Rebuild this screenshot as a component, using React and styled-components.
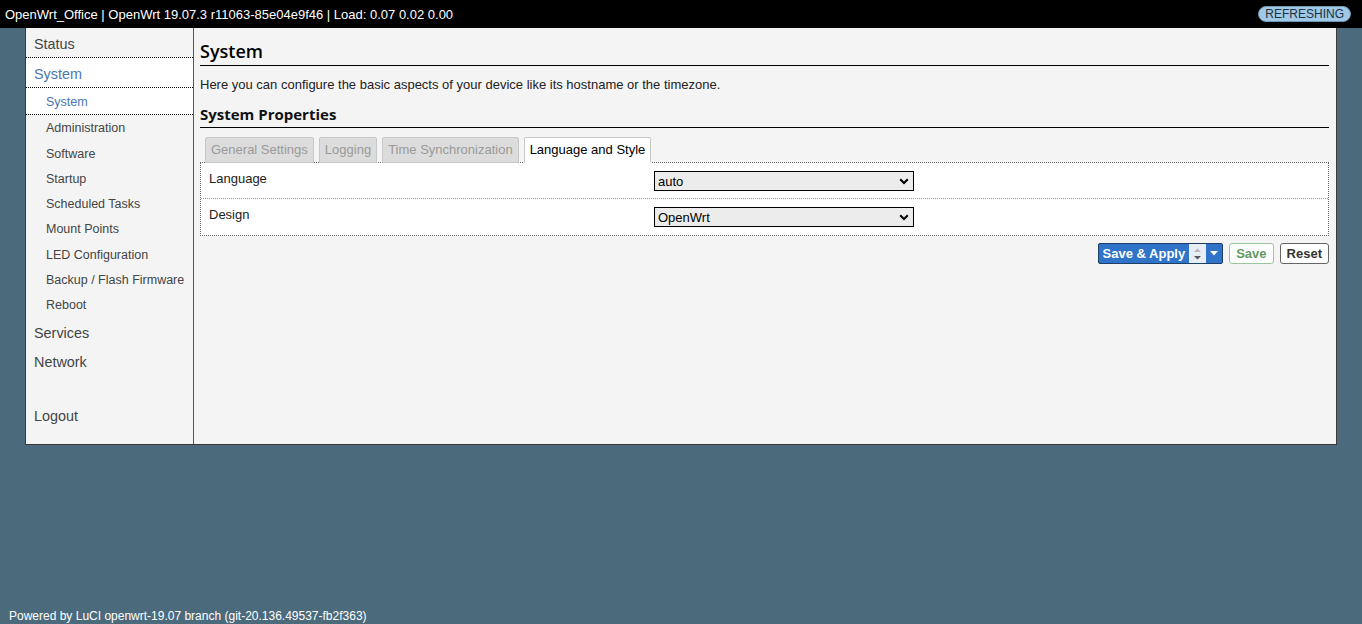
import React from 'react';
import styled, { createGlobalStyle } from 'styled-components';

const GlobalStyle = createGlobalStyle`
  html, body {
    margin: 0;
    padding: 0;
    height: 100%;
    background: #4b6a7c;
    font-family: "Liberation Sans", Arial, sans-serif;
  }
  #root {
    min-height: 100%;
  }
`;

const subMenu = [
  'System',
  'Administration',
  'Software',
  'Startup',
  'Scheduled Tasks',
  'Mount Points',
  'LED Configuration',
  'Backup / Flash Firmware',
  'Reboot',
];

const tabs = ['General Settings', 'Logging', 'Time Synchronization', 'Language and Style'];

export default function App() {
  return (
    <Page>
      <GlobalStyle />
      <Header>
        <HostInfo>OpenWrt_Office | OpenWrt 19.07.3 r11063-85e04e9f46 | Load: 0.07 0.02 0.00</HostInfo>
        <Badge>REFRESHING</Badge>
      </Header>

      <Frame>
        <Sidebar>
          <TopItem $lined>Status</TopItem>
          <TopItem $active $lined>System</TopItem>
          {subMenu.map((item, i) => (
            <SubItem key={item} $active={i === 0}>{item}</SubItem>
          ))}
          <TopItem>Services</TopItem>
          <TopItem>Network</TopItem>
          <Logout>Logout</Logout>
        </Sidebar>

        <Content>
          <PageTitle>System</PageTitle>
          <Description>
            Here you can configure the basic aspects of your device like its hostname or the timezone.
          </Description>
          <SectionTitle>System Properties</SectionTitle>

          <TabBar>
            {tabs.map((t, i) => (
              <Tab key={t} $active={i === tabs.length - 1}>{t}</Tab>
            ))}
          </TabBar>

          <Fieldset>
            <Row>
              <Label>Language</Label>
              <Select>
                <span>auto</span>
                <Chevron />
              </Select>
            </Row>
            <Row $last>
              <Label>Design</Label>
              <Select>
                <span>OpenWrt</span>
                <Chevron />
              </Select>
            </Row>
          </Fieldset>

          <Actions>
            <ApplyGroup>
              <ApplyLabel>Save &amp; Apply</ApplyLabel>
              <Spinner>
                <svg width="9" height="14" viewBox="0 0 9 14">
                  <path d="M1 5 L4.5 1.5 L8 5 Z" fill="#b8b8b8" />
                  <path d="M1 9 L4.5 12.5 L8 9 Z" fill="#555" />
                </svg>
              </Spinner>
              <DropToggle>
                <svg width="8" height="5" viewBox="0 0 8 5">
                  <path d="M0 0 L8 0 L4 4.5 Z" fill="#fff" />
                </svg>
              </DropToggle>
            </ApplyGroup>
            <Button $variant="save">Save</Button>
            <Button>Reset</Button>
          </Actions>
        </Content>
      </Frame>

      <Footer>Powered by LuCI openwrt-19.07 branch (git-20.136.49537-fb2f363)</Footer>
    </Page>
  );
}

function Chevron() {
  return (
    <svg width="10" height="7" viewBox="0 0 10 7">
      <path d="M1.2 1.2 L5 5 L8.8 1.2" fill="none" stroke="#000" strokeWidth="2" />
    </svg>
  );
}

const Page = styled.div`
  min-height: 624px;
  display: flex;
  flex-direction: column;
`;

const Header = styled.header`
  height: 28px;
  background: #000;
  display: flex;
  align-items: center;
  justify-content: space-between;
  padding: 0 11px 0 5px;
`;

const HostInfo = styled.span`
  color: #fff;
  font-size: 13px;
`;

const Badge = styled.span`
  background: #9fc9e6;
  color: #1c3040;
  font-size: 12px;
  line-height: 14px;
  padding: 0 6px;
  border-radius: 8px;
  border: 1px solid #6f98b5;
`;

const Frame = styled.div`
  margin: 0 25px;
  height: 416px;
  display: flex;
  background: #f4f4f4;
  border: 1px solid #3a3a3a;
  border-top: none;
`;

const Sidebar = styled.nav`
  width: 167px;
  border-right: 1px solid #555;
  display: flex;
  flex-direction: column;
  white-space: nowrap;
`;

const TopItem = styled.div`
  font-size: 14.4px;
  color: ${p => (p.$active ? '#4a76ad' : '#444')};
  background: ${p => (p.$active ? '#fff' : 'transparent')};
  padding: ${p => (p.$lined ? '7px 8px 4px' : '6px 8px 5px')};
  line-height: 18px;
  border-bottom: ${p => (p.$lined ? '1px dotted #000' : 'none')};
`;

const SubItem = styled.div`
  font-size: 12.5px;
  line-height: 16.3px;
  color: ${p => (p.$active ? '#4a76ad' : '#444')};
  background: ${p => (p.$active ? '#fff' : 'transparent')};
  border-bottom: ${p => (p.$active ? '1px dotted #000' : 'none')};
  padding: ${p => (p.$active ? '6px 20px 4px' : '5px 20px 4px')};
`;

const Logout = styled(TopItem)`
  margin-top: 25px;
`;

const Content = styled.main`
  flex: 1;
  padding: 11px 7px 0 6px;
  display: flex;
  flex-direction: column;
`;

const PageTitle = styled.h2`
  margin: 0;
  font-family: "Open Sans", sans-serif;
  font-weight: 600;
  font-size: 18px;
  line-height: 24px;
  color: #000;
  padding-bottom: 2px;
  border-bottom: 1px solid #000;
`;

const Description = styled.p`
  margin: 11px 0 0;
  font-size: 13px;
  color: #222;
`;

const SectionTitle = styled.h3`
  margin: 12px 0 0;
  font-family: "Open Sans", sans-serif;
  font-weight: 700;
  font-size: 15px;
  line-height: 20px;
  color: #111;
  padding-bottom: 3px;
  border-bottom: 1px solid #000;
`;

const TabBar = styled.ul`
  list-style: none;
  margin: 9px 0 -1px;
  padding: 0 0 0 5px;
  display: flex;
  gap: 5px;
  position: relative;
  z-index: 1;
`;

const Tab = styled.li`
  font-size: 13px;
  line-height: 16px;
  padding: 4px 5px 4px;
  color: ${p => (p.$active ? '#000' : '#9a9a9a')};
  background: ${p => (p.$active ? '#fff' : '#dcdcdc')};
  border: 1px solid #c8c8c8;
  border-bottom: ${p => (p.$active ? '1px solid #fff' : '1px solid #c8c8c8')};
  border-radius: 2px 2px 0 0;
`;

const Fieldset = styled.div`
  background: #fff;
  border: 1px dotted #666;
`;

const Row = styled.div`
  display: flex;
  align-items: flex-start;
  height: ${p => (p.$last ? '36px' : '35px')};
  border-bottom: ${p => (p.$last ? 'none' : '1px dotted #999')};
`;

const Label = styled.div`
  width: 445px;
  padding: 8px 0 0 8px;
  font-size: 13px;
  color: #222;
`;

const Select = styled.div`
  margin-top: 8px;
  width: 260px;
  height: 20px;
  box-sizing: border-box;
  border: 1px solid #000;
  background: #ececec;
  display: flex;
  align-items: center;
  justify-content: space-between;
  padding: 0 4px 0 3px;
  font-size: 13px;
  color: #000;
`;

const Actions = styled.div`
  display: flex;
  justify-content: flex-end;
  align-items: center;
  gap: 6px;
  margin-top: 7px;
`;

const ApplyGroup = styled.div`
  display: flex;
  align-items: stretch;
  height: 21px;
  box-sizing: border-box;
  border: 1px solid #1d3f66;
  border-radius: 2px;
  background: #2f74c8;
  overflow: hidden;
`;

const ApplyLabel = styled.span`
  color: #fff;
  font-weight: bold;
  font-size: 13px;
  padding: 0 4px;
  display: flex;
  align-items: center;
`;

const Spinner = styled.span`
  background: #e8eef6;
  width: 17px;
  display: flex;
  align-items: center;
  justify-content: center;
`;

const DropToggle = styled.span`
  width: 16px;
  display: flex;
  align-items: center;
  justify-content: center;
  background: #2f74c8;
`;

const Button = styled.button`
  font-family: "Liberation Sans", Arial, sans-serif;
  font-weight: bold;
  font-size: 13px;
  height: 21px;
  padding: 0 6px;
  background: #fff;
  border-radius: 3px;
  color: ${p => (p.$variant === 'save' ? '#5f9a5f' : '#333')};
  border: 1px solid ${p => (p.$variant === 'save' ? '#9cc79c' : '#666')};
`;

const Footer = styled.footer`
  margin-top: auto;
  padding: 0 0 1px 9px;
  color: #fff;
  font-size: 12px;
  line-height: 14px;
`;
